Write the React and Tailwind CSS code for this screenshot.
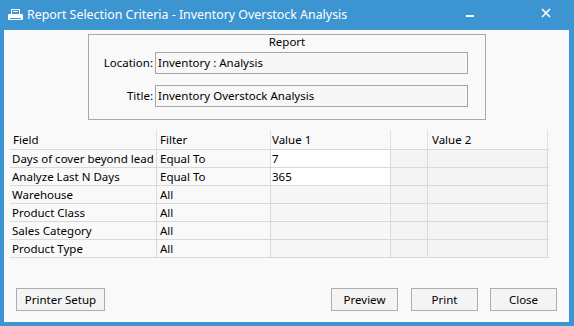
import React from "react";

const rows = [
  ["Days of cover beyond lead time", "Equal To", "7"],
  ["Analyze Last N Days", "Equal To", "365"],
  ["Warehouse", "All", ""],
  ["Product Class", "All", ""],
  ["Sales Category", "All", ""],
  ["Product Type", "All", ""],
];

function Btn({ children, w }) {
  return (
    <div
      className={`h-[23px] ${w} border border-[#adadad] bg-[#f4f4f4] flex items-center justify-center text-black`}
    >
      {children}
    </div>
  );
}

export default function App() {
  return (
    <div
      className="w-[574px] h-[326px] bg-[#3c94d1] flex flex-col overflow-hidden"
      style={{ fontFamily: '"Noto Sans", "Open Sans", sans-serif' }}
    >
      <div className="h-[30px] flex items-center pl-[8px] text-white shrink-0">
        <svg width="15" height="13" viewBox="0 0 15 13" className="mr-[4px]">
          <rect x="3.5" y="0.5" width="8" height="5" fill="none" stroke="white" />
          <rect x="5" y="2" width="5" height="1" fill="white" />
          <rect x="0" y="5" width="15" height="6" rx="1" fill="white" />
          <rect x="2" y="9" width="11" height="1" fill="#3c94d1" />
        </svg>
        <span className="text-[12.4px]">Report Selection Criteria - Inventory Overstock Analysis</span>
        <div className="flex-1" />
        <div className="w-[8px] h-[2px] bg-white mr-[67px] mt-[2px]" />
        <svg width="10" height="10" viewBox="0 0 10 10" className="mr-[23px] -mt-[4px]">
          <path d="M1 1 L9 9 M9 1 L1 9" stroke="white" strokeWidth="1.6" />
        </svg>
      </div>
      <div className="flex-1 ml-[4px] mr-[5px] mb-[4px] bg-[#f9f9f9] flex flex-col text-[11.5px] text-black">
        <div className="flex pt-[4px] pl-[84px]">
          <div className="w-[398px] h-[86px] border border-[#a8a8a8] flex flex-col">
            <div className="text-center h-[15px] leading-[15px] mt-[-1px]">Report</div>
            <div className="flex items-center mt-[3px] h-[22px]">
              <div className="w-[65px] text-right pr-[1px]">Location:</div>
              <div className="ml-[1px] w-[313px] h-[22px] border border-[#a6a6a6] bg-[#f7f7f7] flex items-center pl-[2px]">
                Inventory : Analysis
              </div>
            </div>
            <div className="flex items-center mt-[11px] h-[22px]">
              <div className="w-[65px] text-right pr-[1px]">Title:</div>
              <div className="ml-[1px] w-[313px] h-[22px] border border-[#a6a6a6] bg-[#f7f7f7] flex items-center pl-[2px]">
                Inventory Overstock Analysis
              </div>
            </div>
          </div>
        </div>
        <div className="ml-[6px] mt-[10px] w-[539px]">
          <div className="flex h-[20px] border-b border-[#d9d9d9]">
            <div className="w-[147px] pl-[3px] border-r border-[#e2e2e2] flex items-center">Field</div>
            <div className="w-[114px] pl-[3px] border-r border-[#e2e2e2] flex items-center">Filter</div>
            <div className="w-[120px] pl-[1px] border-r border-[#e2e2e2] flex items-center">Value 1</div>
            <div className="w-[37px] border-r border-[#e2e2e2]" />
            <div className="w-[120px] pl-[4px] border-r border-[#e2e2e2] flex items-center">Value 2</div>
          </div>
          {rows.map((r, i) => (
            <div key={i} className="flex h-[18px] border-b border-[#d9d9d9]">
              <div className="w-[147px] pl-[2px] border-r border-[#d9d9d9] flex items-center whitespace-nowrap overflow-hidden bg-[#f9f9f9]">
                {r[0]}
              </div>
              <div className="w-[114px] pl-[3px] border-r border-[#d9d9d9] flex items-center bg-[#f9f9f9]">{r[1]}</div>
              <div
                className={`w-[120px] pl-[1px] border-r border-[#d9d9d9] flex items-center ${
                  r[2] ? "bg-white" : "bg-[#f7f7f7]"
                }`}
              >
                {r[2]}
              </div>
              <div className="w-[37px] border-r border-[#d9d9d9] bg-[#f4f4f4]" />
              <div className="w-[120px] border-r border-[#d9d9d9] bg-[#f4f4f4]" />
            </div>
          ))}
        </div>
        <div className="flex-1" />
        <div className="flex items-center px-[12px] pb-[11px]">
          <Btn w="w-[89px]">Printer Setup</Btn>
          <div className="flex-1" />
          <Btn w="w-[67px]">Preview</Btn>
          <div className="w-[13px]" />
          <Btn w="w-[67px]">Print</Btn>
          <div className="w-[12px]" />
          <Btn w="w-[67px]">Close</Btn>
        </div>
      </div>
    </div>
  );
}
